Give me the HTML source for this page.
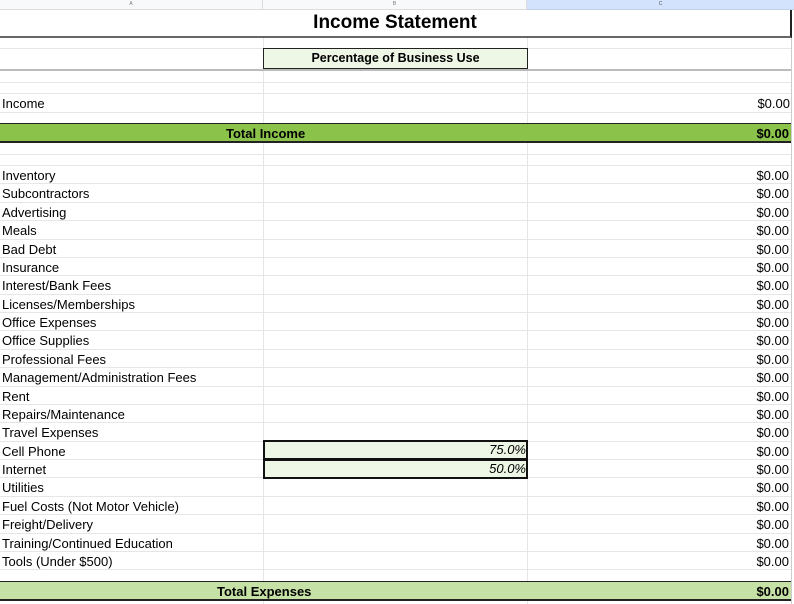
<!DOCTYPE html>
<html><head><meta charset="utf-8"><style>
*{margin:0;padding:0;box-sizing:border-box}
body{width:794px;height:604px;background:#fff;position:relative;overflow:hidden;font-family:"Liberation Sans",Arial,sans-serif;font-size:13px;color:#000}
.a{position:absolute}
.hl{position:absolute;left:0;width:791px;height:1px;background:#e6e6e6}
.vl{position:absolute;width:1px;background:#e6e6e6}
.r{position:absolute;left:0;width:791px;height:18.38px;border-bottom:1px solid #e6e6e6}
.r .l{position:absolute;left:2px;top:1px;line-height:17px}
.r .v{position:absolute;right:2px;top:1px;line-height:17px}
</style></head><body>
<div class="a" style="left:0;top:0;width:263px;height:10px;background:#f8f9fa;border-bottom:1px solid #dcdcdc;border-right:1px solid #dcdcdc;font-size:5px;color:#777;text-align:center;line-height:9px">A</div>
<div class="a" style="left:263px;top:0;width:264px;height:10px;background:#f8f9fa;border-bottom:1px solid #dcdcdc;border-right:1px solid #dcdcdc;font-size:5px;color:#777;text-align:center;line-height:9px">B</div>
<div class="a" style="left:527px;top:0;width:267px;height:10px;background:#d3e3fd;border-bottom:1px solid #c4d3ee;font-size:5px;color:#555;text-align:center;line-height:9px">C</div>
<div class="vl" style="left:263px;top:37px;height:567px"></div>
<div class="vl" style="left:527px;top:37px;height:567px"></div>
<div class="vl" style="left:791px;top:10px;height:594px;background:#ccc"></div>
<div class="a" style="left:0;top:10px;width:792px;height:28px;border-right:2px solid #222;border-bottom:2px solid #666;text-align:center;font-weight:bold;font-size:19px;line-height:26px">Income Statement</div>
<div class="hl" style="top:48px"></div>
<div class="a" style="left:263px;top:48px;width:265px;height:21px;background:#eef6e6;border:1px solid #222;text-align:center;font-weight:bold;font-size:12.5px;line-height:19px">Percentage of Business Use</div>
<div class="hl" style="top:69px;height:2px;background:#bbb"></div>
<div class="hl" style="top:82px"></div>
<div class="hl" style="top:93px"></div>
<div class="a" style="left:2px;top:95px;line-height:17px">Income</div>
<div class="a" style="right:4px;top:95px;line-height:17px">$0.00</div>
<div class="hl" style="top:112px"></div>
<div class="a" style="left:0;top:123px;width:791px;height:20px;background:#8bc34a;border-top:1px solid #222;border-bottom:2px solid #222;font-weight:bold;line-height:17px">
<span class="a" style="left:226px;top:1px">Total Income</span><span class="a" style="right:2px;top:1px">$0.00</span></div>
<div class="hl" style="top:154px"></div>
<div class="hl" style="top:165px"></div>
<div class="r" style="top:166px"><span class="l">Inventory</span><span class="v">$0.00</span></div>
<div class="r" style="top:184.38px"><span class="l">Subcontractors</span><span class="v">$0.00</span></div>
<div class="r" style="top:202.76px"><span class="l">Advertising</span><span class="v">$0.00</span></div>
<div class="r" style="top:221.14px"><span class="l">Meals</span><span class="v">$0.00</span></div>
<div class="r" style="top:239.52px"><span class="l">Bad Debt</span><span class="v">$0.00</span></div>
<div class="r" style="top:257.9px"><span class="l">Insurance</span><span class="v">$0.00</span></div>
<div class="r" style="top:276.28px"><span class="l">Interest/Bank Fees</span><span class="v">$0.00</span></div>
<div class="r" style="top:294.66px"><span class="l">Licenses/Memberships</span><span class="v">$0.00</span></div>
<div class="r" style="top:313.04px"><span class="l">Office Expenses</span><span class="v">$0.00</span></div>
<div class="r" style="top:331.42px"><span class="l">Office Supplies</span><span class="v">$0.00</span></div>
<div class="r" style="top:349.8px"><span class="l">Professional Fees</span><span class="v">$0.00</span></div>
<div class="r" style="top:368.18px"><span class="l">Management/Administration Fees</span><span class="v">$0.00</span></div>
<div class="r" style="top:386.56px"><span class="l">Rent</span><span class="v">$0.00</span></div>
<div class="r" style="top:404.94px"><span class="l">Repairs/Maintenance</span><span class="v">$0.00</span></div>
<div class="r" style="top:423.32px"><span class="l">Travel Expenses</span><span class="v">$0.00</span></div>
<div class="r" style="top:441.7px"><span class="l">Cell Phone</span><span class="v">$0.00</span></div>
<div class="r" style="top:460.08px"><span class="l">Internet</span><span class="v">$0.00</span></div>
<div class="r" style="top:478.46px"><span class="l">Utilities</span><span class="v">$0.00</span></div>
<div class="r" style="top:496.84px"><span class="l">Fuel Costs (Not Motor Vehicle)</span><span class="v">$0.00</span></div>
<div class="r" style="top:515.22px"><span class="l">Freight/Delivery</span><span class="v">$0.00</span></div>
<div class="r" style="top:533.6px"><span class="l">Training/Continued Education</span><span class="v">$0.00</span></div>
<div class="r" style="top:551.98px"><span class="l">Tools (Under $500)</span><span class="v">$0.00</span></div>
<div class="a" style="left:263px;top:440px;width:265px;height:20px;background:#eef6e6;border:2px solid #111;font-style:italic;text-align:right;line-height:16px">75.0%</div>
<div class="a" style="left:263px;top:459px;width:265px;height:20px;background:#eef6e6;border:2px solid #111;font-style:italic;text-align:right;line-height:16px">50.0%</div>
<div class="a" style="left:0;top:581px;width:791px;height:20px;background:#c5e1a5;border-top:1px solid #222;border-bottom:2px solid #222;font-weight:bold;line-height:17px">
<span class="a" style="left:217px;top:1px">Total Expenses</span><span class="a" style="right:2px;top:1px">$0.00</span></div>
</body></html>
